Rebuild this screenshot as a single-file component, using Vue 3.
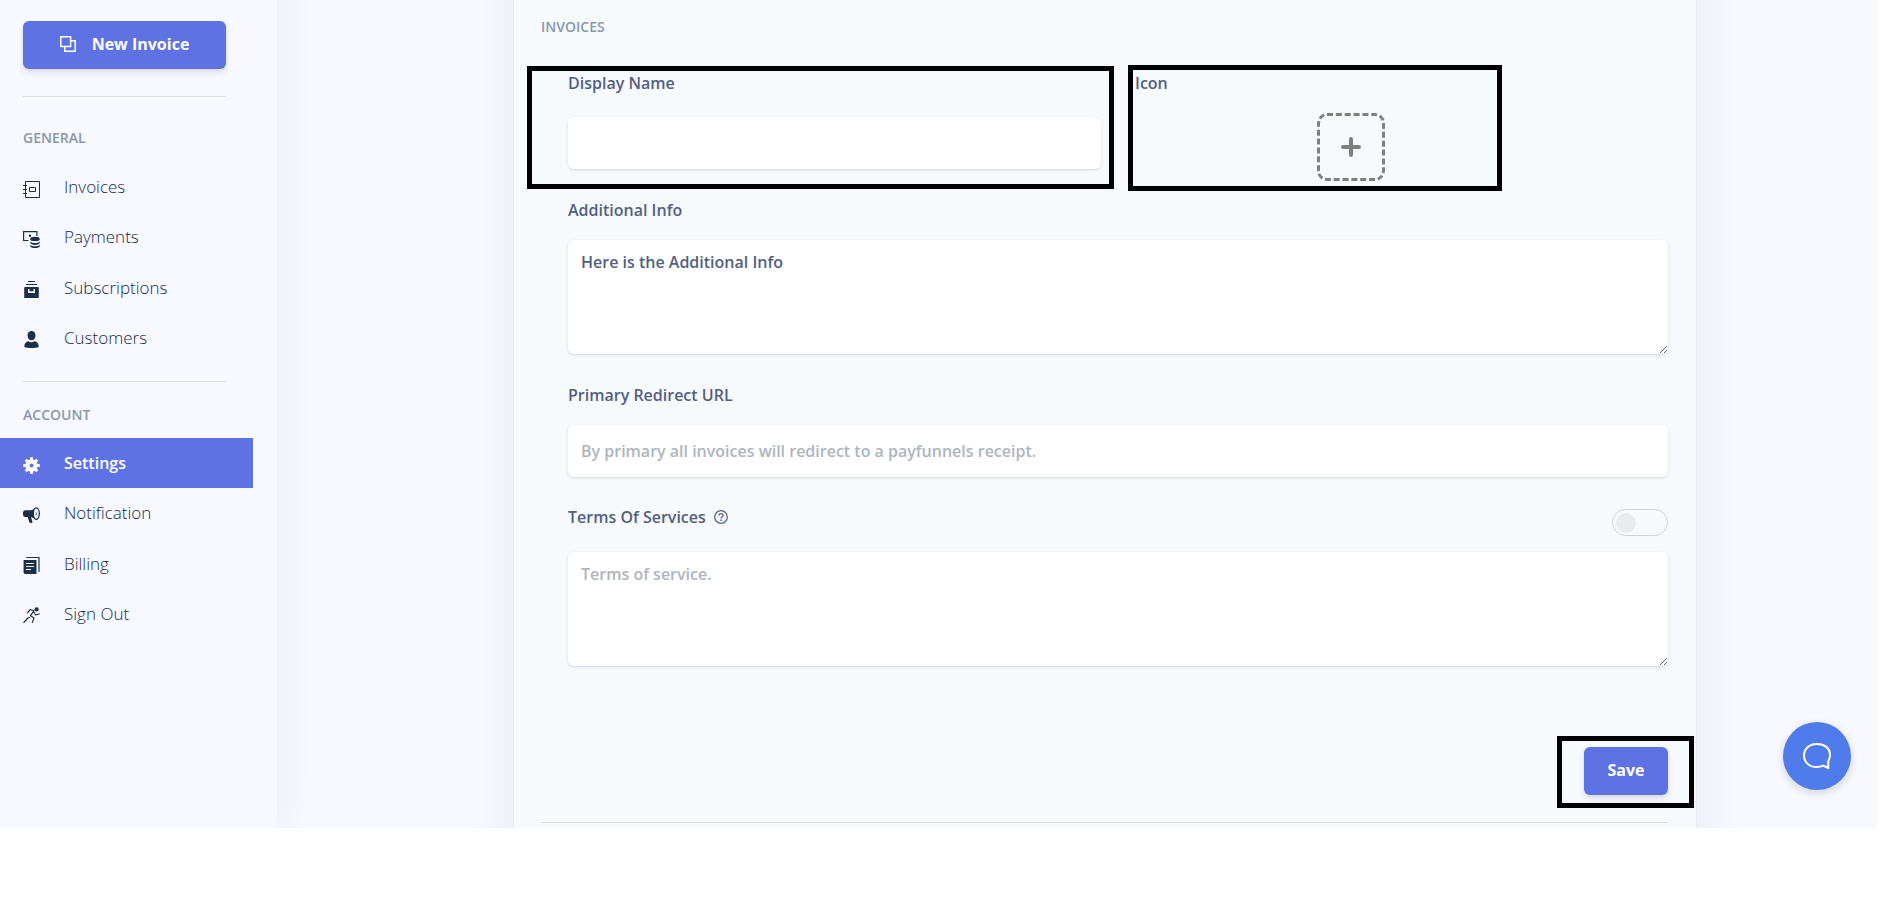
<script setup>
import { ref } from 'vue'

const general = [
  { name: 'Invoices', icon: 'invoices' },
  { name: 'Payments', icon: 'payments' },
  { name: 'Subscriptions', icon: 'subscriptions' },
  { name: 'Customers', icon: 'customers' },
]
const account = [
  { name: 'Settings', icon: 'settings', active: true },
  { name: 'Notification', icon: 'notification' },
  { name: 'Billing', icon: 'billing' },
  { name: 'Sign Out', icon: 'signout' },
]
const groups = [
  { title: 'General', items: general },
  { title: 'Account', items: account },
]

const icons = {
  invoices:
    '<path d="M2.500 .500h14v16h-14zM6.500 6.500h6v4h-6z" fill="none" stroke="currentColor"/><path d="M0 4.500h4M0 8.500h4M0 12.500h4" stroke="currentColor"/>',
  payments:
    '<path d="M5.500 9.500H.600V.700h13.300v4.300" fill="none" stroke="currentColor" stroke-width="1.200"/><circle cx="7" cy="4.800" r="1.200"/><ellipse cx="12" cy="8" rx="4.800" ry="2.200"/><path d="M7.200 10.500c1.500 2 8.100 2 9.700 0v1c0 3.200-9.700 3.200-9.700 0zM7.200 13.800c1.500 2 8.100 2 9.700 0v.900c0 3.200-9.700 3.200-9.700 0z"/>',
  subscriptions:
    '<path d="M5 0h7v1H5zM3 3h11v1H3z"/><path fill-rule="evenodd" d="M2 6h13q.800 0 .800.800V17H1.200V6.800Q1.200 6 2 6zM5 8v4h7V8h-1.500v2.300h-4V8z"/>',
  customers:
    '<ellipse cx="8.500" cy="4.600" rx="4" ry="4.700"/><path d="M5.300 10.200c2 1.500 4.400 1.500 6.400 0 3 .6 4 2.800 4 5.800-3.500 1.300-10.900 1.300-14.400 0 0-3 1-5.200 4-5.800z"/>',
  settings:
    '<circle cx="8.500" cy="8.500" r="4.100" fill="none" stroke="currentColor" stroke-width="4.200"/><path d="M8.500.300v3M8.500 13.700v3M.300 8.500h3M13.700 8.500h3M2.700 2.700l2 2M12.300 12.300l2 2M2.700 14.300l2-2M12.300 4.700l2-2" stroke="currentColor" stroke-width="3"/>',
  notification:
    '<path d="M2 3.200h5.500C9.500 3 11 2 12.500.800v12C11 11.500 9.500 10.300 8 10l1.500 5c0 1-2.600 1.400-3 .5L4.600 10H2Q0 9.800 0 7.500V5.500Q0 3.400 2 3.200z"/><ellipse cx="13.300" cy="6.600" rx="3" ry="5.800" fill="#f8f9fe" stroke="currentColor" stroke-width="1.300"/><path d="M12.800 4.500q1.700 2 0 4.200z"/>',
  billing:
    '<path d="M3.200 .500h12.800v14.500" fill="none" stroke="currentColor" stroke-width="1.200"/><path fill-rule="evenodd" d="M.600 3h12.900v14H2Q.600 17 .600 15.600zM3 6v1h8V6zM3 9v1h8V9zM3 12v1h5v-1z"/>',
  signout:
    '<circle cx="13.600" cy="2.400" r="2.100"/><path d="M4.200 6.200 7.300 2.500l3.700 1.200-3.500 5 3.500 2.200-1.800 5M10.700 4.700l2 3.300 4-1.300M6.800 10.400l-2 .600L.500 15.800" fill="none" stroke="currentColor" stroke-width="1.200" stroke-linejoin="round"/>',
}

const displayName = ref('')
const info = ref('Here is the Additional Info')
const redirect = ref('')
const terms = ref('')
const termsOn = ref(false)
</script>

<template>
  <div class="page">
    <aside class="sidebar">
      <button class="btn new-invoice" type="button">
        <svg width="16" height="16" viewBox="0 0 16 16" aria-hidden="true">
          <path d="M.8.800h9.800v9.800H.8zM10.600 4.800h4.600v10.400H4.800v-4.600" fill="none" stroke="currentColor" stroke-width="1.500" />
        </svg>
        New Invoice
      </button>
      <nav v-for="g in groups" :key="g.title" class="group">
        <hr />
        <h2 class="caption">{{ g.title }}</h2>
        <ul>
          <li v-for="i in g.items" :key="i.name">
            <a href="#" :class="{ active: i.active }">
              <svg width="17" height="17" viewBox="0 0 17 17" fill="currentColor" aria-hidden="true" v-html="icons[i.icon]"></svg>
              <span>{{ i.name }}</span>
            </a>
          </li>
        </ul>
      </nav>
    </aside>

    <main class="content">
      <form class="card" @submit.prevent>
        <h1 class="caption">Invoices</h1>
        <div class="fields">
          <div class="row">
            <div class="field marked mark-name">
              <label for="display-name">Display Name</label>
              <input id="display-name" v-model="displayName" type="text" />
            </div>
            <div class="field marked mark-icon">
              <label for="icon-button">Icon</label>
              <button id="icon-button" class="upload" type="button">
                <svg width="20" height="20" viewBox="0 0 20 20" aria-hidden="true">
                  <path d="M10 2v16M2 10h16" stroke="currentColor" stroke-width="4" stroke-linecap="round" />
                </svg>
              </button>
            </div>
          </div>
          <div class="field info">
            <label for="info">Additional Info</label>
            <textarea id="info" v-model="info"></textarea>
          </div>
          <div class="field redirect">
            <label for="redirect">Primary Redirect URL</label>
            <input id="redirect" v-model="redirect" type="text" placeholder="By primary all invoices will redirect to a payfunnels receipt." />
          </div>
          <div class="field terms">
            <div class="terms-head">
              <label for="terms">Terms Of Services</label>
              <svg class="help" width="14" height="14" viewBox="0 0 14 14" fill="none" stroke="currentColor" aria-hidden="true">
                <circle cx="7" cy="7" r="6.300" stroke-width="1.200" />
                <path d="M5 5.600C5 2.900 9 3 9 5.400 9 6.900 7 6.900 7 8.500" stroke-width="1.300" />
                <path d="M7 9.500v1.500" stroke-width="1.500" />
              </svg>
              <input v-model="termsOn" class="switch" type="checkbox" aria-label="Enable terms of services" />
            </div>
            <textarea id="terms" v-model="terms" placeholder="Terms of service."></textarea>
          </div>
          <div class="actions">
            <div class="marked mark-save">
              <button class="btn save" type="submit">Save</button>
            </div>
          </div>
        </div>
        <hr />
      </form>
    </main>

    <button class="chat" type="button" aria-label="Open chat">
      <svg width="28" height="28" viewBox="0 0 28 28" fill="none" stroke="#fff" stroke-width="2" stroke-linejoin="round" aria-hidden="true">
        <path d="M25.500 18.500c1.200-2 1.500-4 1.500-5.500C27 6 21.500 2 14 2S1 6.500 1 13.500 6.500 25 13.500 25c2.800 0 5-.5 6.800-1.300L25.300 26l-.1-4.300c0-1.500-.2-2.200.3-3.200z" />
      </svg>
    </button>
  </div>
</template>

<style>
body {
  background: #fff;
}
</style>

<style scoped>
.page {
  position: relative;
  display: flex;
  margin-right: 16px;
  overflow: hidden;
  background: #f8f9fe;
  color: #525f7f;
  font: 400 16px/24px "Open Sans", "Noto Sans", sans-serif;
}
.page * {
  box-sizing: border-box;
}
hr {
  margin: 0;
  border: 0;
  border-top: 1px solid #dddfe5;
}
.caption {
  margin: 0;
  color: #8898aa;
  font-size: 14px;
  font-weight: 600;
  line-height: 20px;
  text-transform: uppercase;
}
.btn {
  height: 48px;
  padding: 0 0 2px;
  border: 0;
  border-radius: 6px;
  background: #5e72e4;
  color: #fff;
  font: 700 16px/24px "Open Sans", "Noto Sans", sans-serif;
  box-shadow: 0 4px 6px rgba(50, 50, 93, .11), 0 1px 3px rgba(0, 0, 0, .08);
}
.sidebar {
  flex: none;
  width: 277px;
  margin-top: -60px;
  padding: 81px 24px 0 0;
  background: #f8f9fe;
  box-shadow: 0 0 45px rgba(0, 0, 0, .07);
}
.new-invoice {
  display: flex;
  align-items: center;
  justify-content: center;
  gap: 16px;
  width: 203px;
  margin: 0 0 27px 23px;
}
.group hr {
  margin: 0 27px 0 23px;
}
.group .caption {
  margin: 31px 0 14px 23px;
}
.group + .group {
  margin-top: 18px;
}
.group + .group .caption {
  margin: 23px 0 13px 23px;
}
.group ul {
  display: grid;
  grid-auto-rows: 1fr;
  min-height: 201px;
  margin: 0;
  padding: 0;
  list-style: none;
}
.group a {
  display: flex;
  align-items: center;
  gap: 24px;
  height: 100%;
  padding-left: 23px;
  color: #172b4d;
  font-size: 17px;
  font-weight: 300;
  text-decoration: none;
}
.group a svg {
  margin-top: 4px;
  color: #1b2f48;
}
.group a.active,
.group a.active svg {
  background: #5e72e4;
  color: #fff;
  font-size: 16px;
  font-weight: 600;
}
.content {
  flex: 1;
  min-width: 0;
  padding: 0 181px 0 236px;
}
.card {
  margin: -60px 0;
  padding: 76px 28px 64px 27px;
  border: 1px solid #e9ecef;
  background: #f6fafd;
  box-shadow: 0 0 45px rgba(0, 0, 0, .07);
}
.fields {
  padding: 34px 0 27px 27px;
}
.row {
  display: grid;
  grid-template-columns: 1fr 1fr;
  gap: 34px;
}
.field {
  display: flex;
  flex-direction: column;
}
label {
  font-size: 16px;
  font-weight: 600;
}
.field > input,
textarea {
  display: block;
  width: 100%;
  border: 0;
  border-radius: 6px;
  outline: 0;
  background: #fff;
  color: #525f7f;
  font: 600 16px/24px "Open Sans", "Noto Sans", sans-serif;
  box-shadow: 0 1px 3px rgba(50, 50, 93, .15), 0 1px 0 rgba(0, 0, 0, .02);
}
.field > input {
  height: 52px;
  padding: 0 13px;
}
textarea {
  height: 114px;
  padding: 10px 13px;
  resize: vertical;
}
::placeholder {
  color: #adb5bd;
  opacity: 1;
}
.row input {
  margin-top: 22px;
}
.marked {
  position: relative;
}
.marked::after {
  content: "";
  position: absolute;
  border: 5px solid #000;
  pointer-events: none;
}
.mark-name::after {
  inset: -5px -13px -20px -41px;
}
.mark-icon::after {
  inset: -6px 166px -22px -7px;
}
.upload {
  display: grid;
  place-items: center;
  width: 68px;
  height: 68px;
  margin: 18px 0 -12px 182px;
  border: 3px dashed #808080;
  border-radius: 10px;
  background: none;
  color: #808080;
}
.info {
  gap: 18px;
  margin-top: 29px;
}
.redirect {
  gap: 18px;
  margin-top: 29px;
}
.terms {
  margin-top: 28px;
}
.terms-head {
  display: flex;
  align-items: center;
  gap: 8px;
  margin-bottom: 16px;
}
.terms-head label,
.help {
  margin-bottom: 7px;
}
.switch {
  appearance: none;
  display: flex;
  width: 56px;
  height: 27px;
  margin: 4px 0 0 auto;
  padding: 3px;
  border: 1px solid #ced4da;
  border-radius: 14px;
}
.switch::before {
  content: "";
  width: 20px;
  height: 20px;
  border-radius: 50%;
  background: #e9ecef;
}
.switch:checked {
  justify-content: flex-end;
}
.actions {
  display: flex;
  justify-content: flex-end;
  margin-top: 81px;
}
.save {
  display: block;
  width: 84px;
}
.mark-save::after {
  inset: -11px -26px -13px -27px;
}
.chat {
  position: absolute;
  right: 27px;
  bottom: 38px;
  display: grid;
  place-items: center;
  width: 68px;
  height: 68px;
  border: 0;
  border-radius: 50%;
  background: #507ceb;
  box-shadow: 0 3px 10px rgba(0, 0, 0, .15);
}
</style>
